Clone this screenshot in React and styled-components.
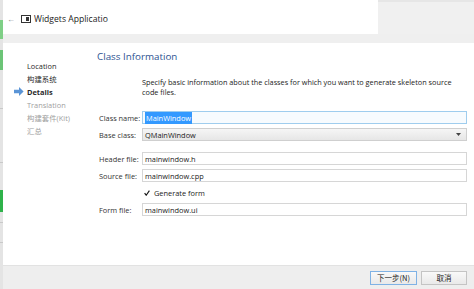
import React from 'react';
import styled, { createGlobalStyle } from 'styled-components';

const Global = createGlobalStyle`
  html, body { margin: 0; padding: 0; background: #fff; }
  body { width: 474px; height: 289px; overflow: hidden; font-family: "Liberation Sans", "Noto Sans CJK SC", sans-serif; }
`;

const Frame = styled.div`
  display: flex;
  width: 474px;
  height: 289px;
`;

const EdgeStrip = styled.div`
  width: 3px;
  flex: none;
  background: linear-gradient(to bottom,
    #e4e4e4 0 20px, #7fcf86 20px 39px, #e4e4e4 39px 50px, #6cc477 50px 70px,
    #e4e4e4 70px 108px, #c9c9c9 108px 109px, #e4e4e4 109px 162px, #c9c9c9 162px 163px,
    #e4e4e4 163px 190px, #2fb24a 190px 212px, #e4e4e4 212px 222px, #c9c9c9 222px 223px,
    #e4e4e4 223px 242px, #c9c9c9 242px 243px, #e4e4e4 243px);
`;

const Window = styled.div`
  flex: 1;
  display: flex;
  flex-direction: column;
  min-width: 0;
`;

const TitleBar = styled.div`
  height: 34px;
  display: flex;
  flex: none;
`;

const TitleArea = styled.div`
  width: 375px;
  background: #fff;
  display: flex;
  align-items: center;
  padding: 4px 0 0 4px;
  box-sizing: border-box;
  font-size: 9px;
  color: #222;
`;

const Back = styled.span`
  color: #888;
  font-size: 8px;
  width: 14px;
`;

const TitleText = styled.span`
  margin-left: 3px;
  font-family: "Open Sans", sans-serif;
  font-size: 8.6px;
`;

const Behind = styled.div`
  flex: 1;
  background: #f0f0f0;
  border-top: 2px solid #e6e6e6;
`;

const Band = styled.div`
  height: 9px;
  flex: none;
  background: #efefef;
`;

const Body = styled.div`
  flex: 1;
  display: flex;
  background: #fff;
`;

const Sidebar = styled.div`
  width: 94px;
  flex: none;
  padding: 16px 0 0 11px;
  box-sizing: border-box;
`;

const Step = styled.div`
  display: flex;
  align-items: center;
  height: 13px;
  font-family: "Open Sans", "Noto Sans CJK SC", sans-serif;
  font-size: 7.4px;
  color: ${p => (p.$done ? '#2a2a2a' : '#a0a0a0')};
  font-weight: ${p => (p.$current ? 700 : 400)};
  white-space: nowrap;
`;

const Marker = styled.span`
  width: 13px;
  display: flex;
  align-items: center;
`;

const Content = styled.div`
  flex: 1;
  padding: 7px 7px 0 0;
  font-family: "Open Sans", "Noto Sans CJK SC", sans-serif;
`;

const Heading = styled.div`
  color: #2c5190;
  font-size: 9.8px;
  line-height: 14px;
`;

const Description = styled.div`
  margin: 13px 0 0 45px;
  font-size: 7.3px;
  line-height: 10px;
  color: #1a1a1a;
`;

const Form = styled.div`
  margin-top: 14px;
  display: grid;
  grid-template-columns: 45px 1fr;
  row-gap: 4px;
  align-items: center;
`;

const Label = styled.div`
  font-size: 7.4px;
  color: #333;
  padding-left: 2px;
  margin-top: ${p => p.$gap || 0}px;
`;

const Field = styled.div`
  height: 13px;
  box-sizing: border-box;
  border: 1px solid ${p => (p.$focus ? '#9fcdee' : '#d6d6d6')};
  background: ${p => (p.$focus ? '#f7fbfe' : '#fff')};
  display: flex;
  align-items: center;
  padding-left: 2px;
  font-size: 7.4px;
  color: #1a1a1a;
  margin-top: ${p => p.$gap || 0}px;
`;

const Combo = styled(Field)`
  background: linear-gradient(#f6f6f6, #e6e6e6);
  border-color: #cfcfcf;
  justify-content: space-between;
  padding-right: 5px;
`;

const Selected = styled.span`
  background: #3399ff;
  color: #fff;
  padding: 1px 1px;
`;

const Check = styled.div`
  grid-column: 2;
  height: 13px;
  display: flex;
  align-items: center;
  font-size: 7.4px;
  color: #1a1a1a;
`;

const Tick = styled.span`
  width: 10px;
  padding-left: 2px;
  display: flex;
  align-items: center;
`;

const Footer = styled.div`
  height: 23px;
  flex: none;
  background: #eeeeee;
  border-top: 1px solid #e2e2e2;
  display: flex;
  align-items: center;
  justify-content: flex-end;
  gap: 4px;
  padding-right: 7px;
`;

const Button = styled.div`
  width: ${p => p.$w}px;
  height: 14px;
  box-sizing: border-box;
  border: 1px solid ${p => (p.$primary ? '#7fb2e5' : '#c4c4c4')};
  background: linear-gradient(#f9f9f9, #e9e9e9);
  display: flex;
  align-items: center;
  justify-content: center;
  font-family: "Noto Sans CJK SC", sans-serif;
  font-size: 7.5px;
  color: #222;
`;

const steps = [
  { name: 'Location', done: true },
  { name: '构建系统', done: true },
  { name: 'Details', done: true, current: true },
  { name: 'Translation' },
  { name: '构建套件(Kit)' },
  { name: '汇总' },
];

function App() {
  return (
    <>
      <Global />
      <Frame>
        <EdgeStrip />
        <Window>
          <TitleBar>
            <TitleArea>
              <Back>←</Back>
              <svg width="10" height="8" viewBox="0 0 10 8">
                <rect x="0.5" y="0.5" width="9" height="7" fill="none" stroke="#333" />
                <rect x="5" y="2" width="3" height="4" fill="#333" />
              </svg>
              <TitleText>Widgets Applicatio</TitleText>
            </TitleArea>
            <Behind />
          </TitleBar>
          <Band />
          <Body>
            <Sidebar>
              {steps.map(s => (
                <Step key={s.name} $done={s.done} $current={s.current}>
                  <Marker>
                    {s.current && (
                      <svg width="10" height="9" viewBox="0 0 10 9">
                        <path d="M0 2.8H5V0L9.6 4.5L5 9V6.2H0Z" fill="#5a94d6" />
                      </svg>
                    )}
                  </Marker>
                  {s.name}
                </Step>
              ))}
            </Sidebar>
            <Content>
              <Heading>Class Information</Heading>
              <Description>
                Specify basic information about the classes for which you want to generate skeleton source
                <br />
                code files.
              </Description>
              <Form>
                <Label>Class name:</Label>
                <Field $focus><Selected>MainWindow</Selected></Field>
                <Label>Base class:</Label>
                <Combo>
                  QMainWindow
                  <svg width="5" height="3" viewBox="0 0 5 3"><path d="M0 0H5L2.5 3Z" fill="#444" /></svg>
                </Combo>
                <Label $gap={7}>Header file:</Label>
                <Field $gap={7}>mainwindow.h</Field>
                <Label>Source file:</Label>
                <Field>mainwindow.cpp</Field>
                <Check>
                  <Tick>
                    <svg width="6" height="6" viewBox="0 0 6 6">
                      <path d="M0.6 3.2L2.2 5.2L5.4 0.6" fill="none" stroke="#111" strokeWidth="1.1" />
                    </svg>
                  </Tick>
                  Generate form
                </Check>
                <Label>Form file:</Label>
                <Field>mainwindow.ui</Field>
              </Form>
            </Content>
          </Body>
          <Footer>
            <Button $primary $w={47}>下一步(N)</Button>
            <Button $w={46}>取消</Button>
          </Footer>
        </Window>
      </Frame>
    </>
  );
}

export default App;
